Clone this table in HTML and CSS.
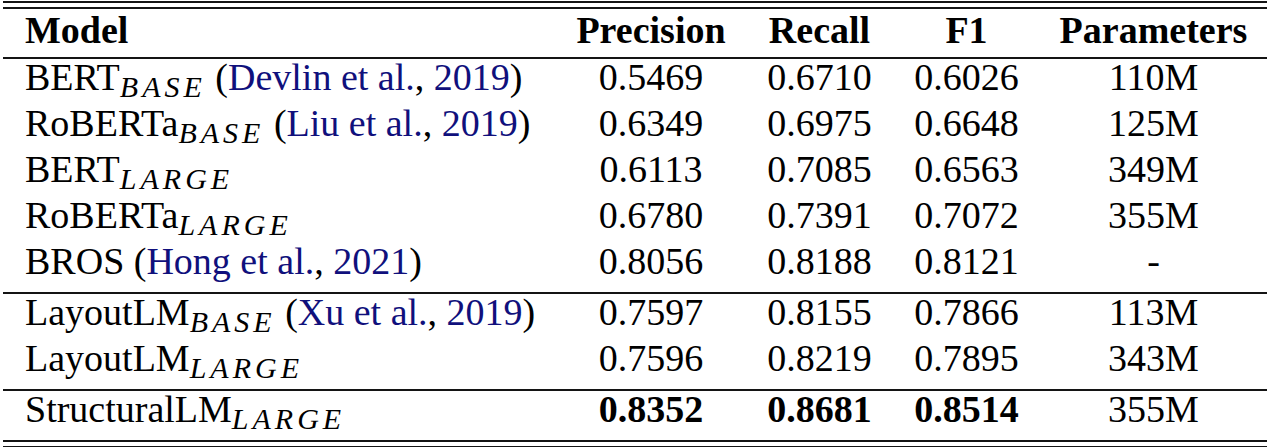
FILE: index.html
```html
<!DOCTYPE html>
<html lang="en">
<head>
<meta charset="utf-8">
<title>Results table</title>
<link rel="stylesheet" href="styles.css">
</head>
<body>
<div class="table">
  <div class="rule"></div>
  <div class="rule rule-gap"></div>
  <div class="row head">
    <div class="cell name">Model</div>
    <div class="cell">Precision</div>
    <div class="cell">Recall</div>
    <div class="cell">F1</div>
    <div class="cell">Parameters</div>
  </div>
  <div class="rule"></div>
  <div class="section">
    <div class="row">
      <div class="cell name">BERT<span class="sub">BASE</span> (<span class="cite">Devlin et al.</span>, <span class="cite">2019</span>)</div>
      <div class="cell">0.5469</div>
      <div class="cell">0.6710</div>
      <div class="cell">0.6026</div>
      <div class="cell">110M</div>
    </div>
    <div class="row">
      <div class="cell name">RoBERTa<span class="sub">BASE</span> (<span class="cite">Liu et al.</span>, <span class="cite">2019</span>)</div>
      <div class="cell">0.6349</div>
      <div class="cell">0.6975</div>
      <div class="cell">0.6648</div>
      <div class="cell">125M</div>
    </div>
    <div class="row">
      <div class="cell name">BERT<span class="sub">LARGE</span></div>
      <div class="cell">0.6113</div>
      <div class="cell">0.7085</div>
      <div class="cell">0.6563</div>
      <div class="cell">349M</div>
    </div>
    <div class="row">
      <div class="cell name">RoBERTa<span class="sub">LARGE</span></div>
      <div class="cell">0.6780</div>
      <div class="cell">0.7391</div>
      <div class="cell">0.7072</div>
      <div class="cell">355M</div>
    </div>
    <div class="row">
      <div class="cell name">BROS (<span class="cite">Hong et al.</span>, <span class="cite">2021</span>)</div>
      <div class="cell">0.8056</div>
      <div class="cell">0.8188</div>
      <div class="cell">0.8121</div>
      <div class="cell">-</div>
    </div>
  </div>
  <div class="rule"></div>
  <div class="section">
    <div class="row">
      <div class="cell name">LayoutLM<span class="sub">BASE</span> (<span class="cite">Xu et al.</span>, <span class="cite">2019</span>)</div>
      <div class="cell">0.7597</div>
      <div class="cell">0.8155</div>
      <div class="cell">0.7866</div>
      <div class="cell">113M</div>
    </div>
    <div class="row">
      <div class="cell name">LayoutLM<span class="sub">LARGE</span></div>
      <div class="cell">0.7596</div>
      <div class="cell">0.8219</div>
      <div class="cell">0.7895</div>
      <div class="cell">343M</div>
    </div>
  </div>
  <div class="rule"></div>
  <div class="section">
    <div class="row">
      <div class="cell name">StructuralLM<span class="sub">LARGE</span></div>
      <div class="cell best">0.8352</div>
      <div class="cell best">0.8681</div>
      <div class="cell best">0.8514</div>
      <div class="cell">355M</div>
    </div>
  </div>
  <div class="rule"></div>
  <div class="rule rule-gap"></div>
</div>
</body>
</html>
```
FILE: styles.css
```css
html, body {
  margin: 0;
  padding: 0;
  background: #ffffff;
}

body {
  font-family: "Liberation Serif", "Times New Roman", serif;
  color: #000000;
}

.table {
  width: 1264px;
  margin-left: 3px;
  padding-top: 1px;
}

.rule {
  height: 2px;
  background: #141414;
}

.rule-gap {
  margin-top: 4px;
}

.row {
  display: grid;
  grid-template-columns: 553px 190px 147px 147px 227px;
  height: 46px;
  font-size: 38px;
  line-height: 36px;
  white-space: nowrap;
}

.row.head {
  height: 48px;
  line-height: 42px;
  font-weight: bold;
}

.section {
  padding-bottom: 3px;
}

.cell {
  text-align: center;
}

.cell.name {
  text-align: left;
  padding-left: 22px;
}

.best {
  font-weight: bold;
}

.sub {
  font-style: italic;
  font-size: 30px;
  letter-spacing: 4px;
  vertical-align: -7px;
  line-height: 0;
}

.cite {
  color: #10107c;
}
```
